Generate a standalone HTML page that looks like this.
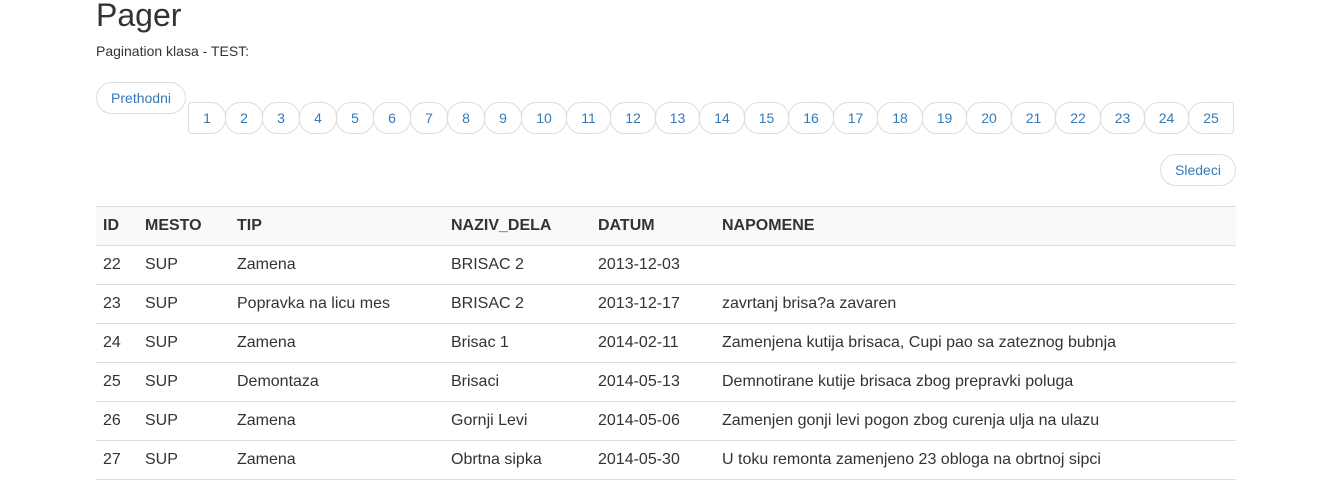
<!DOCTYPE html>
<html><head><meta charset="utf-8"><style>
body{margin:0;background:#fff;font-family:"Liberation Sans",sans-serif;color:#333;width:1327px;height:486px;overflow:hidden;position:relative}
.a{position:absolute}
h1{position:absolute;left:96px;top:-5px;margin:0;font-weight:400;font-size:32px;line-height:40px;color:#333}
.sub{left:96px;top:43px;font-size:14px;line-height:16px}
.btn{position:absolute;border:1px solid #ddd;border-radius:16px;color:#337ab7;font-size:14px;display:flex;align-items:center;justify-content:center;box-sizing:border-box;height:32px;background:#fff}
.pg{position:absolute;left:188px;top:102px;display:flex}
.pg span{box-sizing:border-box;height:32px;border:1px solid #ddd;border-radius:15px;margin-left:-1px;display:flex;align-items:center;justify-content:center;color:#337ab7;font-size:14px;background:#fff;width:38px;flex:none}
.pg span.d{width:45px}
.pg span.e{width:46px}
.pg span:first-child{border-radius:4px 15px 15px 4px;margin-left:0}
.pg span:last-child{border-radius:15px 4px 4px 15px}
table{position:absolute;left:96px;top:206px;width:1140px;border-collapse:collapse;font-size:16px}
td,th{height:39px;box-sizing:border-box;padding:0 0 0 7px;text-align:left;border-top:1px solid #ddd;vertical-align:middle}
th{font-weight:700;background:#f9f9f9;border-bottom:1px solid #ddd;height:39px}
tr:last-child td{border-bottom:1px solid #ddd}
</style></head><body>
<h1>Pager</h1>
<div class="a sub">Pagination klasa - TEST:</div>
<div class="btn" style="left:96px;top:82px;width:90px">Prethodni</div>
<div class="pg">
<span>1</span><span>2</span><span>3</span><span>4</span><span>5</span><span>6</span><span>7</span><span>8</span><span>9</span>
<span class="e">10</span><span class="d">11</span><span class="e">12</span><span class="d">13</span><span class="e">14</span><span class="d">15</span><span class="e">16</span><span class="d">17</span><span class="e">18</span><span class="d">19</span><span class="e">20</span><span class="d">21</span><span class="e">22</span><span class="d">23</span><span class="d">24</span><span class="e">25</span>
</div>
<div class="btn" style="left:1160px;top:154px;width:76px">Sledeci</div>
<table>
<tr><th style="width:42px">ID</th><th style="width:92px">MESTO</th><th style="width:214px">TIP</th><th style="width:147px">NAZIV_DELA</th><th style="width:124px">DATUM</th><th>NAPOMENE</th></tr>
<tr><td>22</td><td>SUP</td><td>Zamena</td><td>BRISAC 2</td><td>2013-12-03</td><td></td></tr>
<tr><td>23</td><td>SUP</td><td>Popravka na licu mes</td><td>BRISAC 2</td><td>2013-12-17</td><td>zavrtanj brisa?a zavaren</td></tr>
<tr><td>24</td><td>SUP</td><td>Zamena</td><td>Brisac 1</td><td>2014-02-11</td><td>Zamenjena kutija brisaca, Cupi pao sa zateznog bubnja</td></tr>
<tr><td>25</td><td>SUP</td><td>Demontaza</td><td>Brisaci</td><td>2014-05-13</td><td>Demnotirane kutije brisaca zbog prepravki poluga</td></tr>
<tr><td>26</td><td>SUP</td><td>Zamena</td><td>Gornji Levi</td><td>2014-05-06</td><td>Zamenjen gonji levi pogon zbog curenja ulja na ulazu</td></tr>
<tr><td>27</td><td>SUP</td><td>Zamena</td><td>Obrtna sipka</td><td>2014-05-30</td><td>U toku remonta zamenjeno 23 obloga na obrtnoj sipci</td></tr>
</table>
</body></html>
